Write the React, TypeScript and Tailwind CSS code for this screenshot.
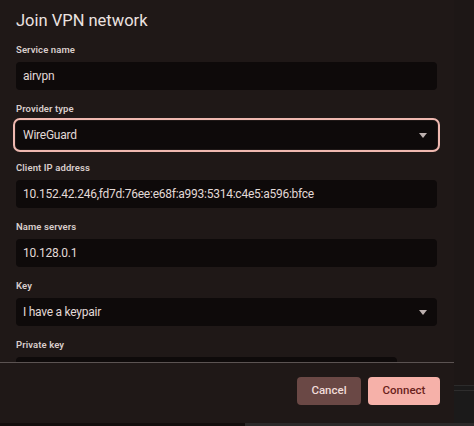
import React from "react";

const Caret = () => (
  <svg width="8" height="5" viewBox="0 0 8 5" className="shrink-0">
    <path d="M0 0 L8 0 L4 5 Z" fill="#bdb1af" />
  </svg>
);

const Field = ({
  label,
  children,
}: {
  label: string;
  children: React.ReactNode;
}) => (
  <div className="flex flex-col">
    <label className="text-[9.5px] leading-3 font-semibold tracking-[0.01em] text-[#d8cdcb]">
      {label}
    </label>
    <div className="mt-[6px]">{children}</div>
  </div>
);

const TextBox = ({ value }: { value: string }) => (
  <div className="w-[421px] h-7 rounded-[4px] bg-[#0e0a0a] px-[7px] flex items-center text-[12px] tracking-[-0.25px] text-[#e2d9d7]">
    {value}
  </div>
);

const SelectBox = ({
  value,
  focused,
}: {
  value: string;
  focused?: boolean;
}) =>
  focused ? (
    <div className="w-[421px] h-7 rounded-[4px] bg-[#0e0a0a] pl-[7px] pr-[10px] flex items-center justify-between text-[12px] tracking-[-0.25px] text-[#e2d9d7] outline-2 outline-[#efb8b0] outline-offset-[1px]">
      <span>{value}</span>
      <Caret />
    </div>
  ) : (
    <div className="w-[421px] h-7 rounded-[4px] bg-[#0e0a0a] pl-[7px] pr-[10px] flex items-center justify-between text-[12px] tracking-[-0.25px] text-[#e2d9d7]">
      <span>{value}</span>
      <Caret />
    </div>
  );

export default function App() {
  return (
    <div
      className="w-[474px] h-[426px] overflow-hidden flex flex-col bg-[#1a1413]"
      style={{ fontFamily: "Roboto, 'Liberation Sans', sans-serif" }}
    >
      <div className="flex h-[423px]">
        <div className="w-[454px] flex flex-col bg-[#1f1817]">
          <div className="h-[362px] overflow-hidden px-4">
            <h1 className="mt-[9px] text-[16.5px] leading-6 text-[#ece2e0]">
              Join VPN network
            </h1>
            <div className="mt-[11px] flex flex-col gap-[13px]">
              <Field label="Service name">
                <TextBox value="airvpn" />
              </Field>
              <Field label="Provider type">
                <SelectBox value="WireGuard" focused />
              </Field>
              <Field label="Client IP address">
                <TextBox value="10.152.42.246,fd7d:76ee:e68f:a993:5314:c4e5:a596:bfce" />
              </Field>
              <Field label="Name servers">
                <TextBox value="10.128.0.1" />
              </Field>
              <Field label="Key">
                <SelectBox value="I have a keypair" />
              </Field>
              <Field label="Private key">
                <div className="w-[381px] h-7 rounded-[4px] bg-[#0e0a0a]" />
              </Field>
            </div>
          </div>
          <div className="h-px bg-[#5b5352]" />
          <div className="flex-1 flex justify-end items-start gap-[7px] pt-[14px] pr-[14px]">
            <button className="w-16 h-7 rounded-[4px] bg-[#6a4845] text-[11.5px] font-medium text-[#f1dcd9]">
              Cancel
            </button>
            <button className="w-[72px] h-7 rounded-[4px] bg-[#f6b1a9] text-[11.5px] font-medium text-[#6a1f1c]">
              Connect
            </button>
          </div>
        </div>
        <div className="flex-1 flex flex-col">
          <div className="flex-1 bg-[#1d1716]" />
          <div className="h-[38px] bg-[#1b1a1a] border-t border-[#2c2b2b] flex flex-col">
            <div className="mt-[4px] h-px bg-[#2e2d2d]" />
          </div>
        </div>
      </div>
      <div className="flex flex-1">
        <div className="w-[245px] bg-[#130e0d]" />
        <div className="flex-1 bg-[#2b2929]" />
      </div>
    </div>
  );
}
